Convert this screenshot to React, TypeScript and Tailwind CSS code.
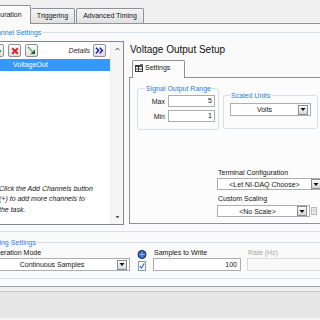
import React from 'react';

const DropArrow = () => (
  <span className="flex h-[10px] w-[10px] shrink-0 items-center justify-center border border-[#8a8d93] bg-gradient-to-b from-[#fafafa] to-[#d6d6d6]">
    <svg width="6" height="5" viewBox="0 0 6 5">
      <path d="M0.5 1h5L3 4z" fill="#111" />
    </svg>
  </span>
);

interface RingProps {
  text: string;
  className: string;
}

const Ring = ({ text, className }: RingProps) => (
  <div className={`flex items-center border border-[#abadb3] bg-white pr-[2px] ${className}`}>
    <span className="flex-1 text-center">{text}</span>
    <DropArrow />
  </div>
);

const ToolButton = ({ children }: { children: React.ReactNode }) => (
  <span className="flex h-[13px] w-[13px] items-center justify-center rounded-[2px] border border-[#8e9196] bg-gradient-to-b from-[#fbfbfb] to-[#dedede]">
    {children}
  </span>
);

export default function App() {
  return (
    <div className="h-[320px] w-[320px] overflow-hidden bg-[#f0f0f0] font-['Liberation_Sans',Arial,sans-serif] text-[7px] leading-[9px] text-[#151515]">
      <div className="-ml-[34px] flex w-[400px] flex-col">
        {/* top tabs */}
        <div className="flex h-[24px] items-end border-b border-[#8e9196] pl-[3px]">
          <div className="relative z-10 -mb-px h-[19px] w-[62px] rounded-t-[2px] border border-b-0 border-[#8e9196] bg-[#fafafa] pl-[10px] pt-[4px]">
            Configuration
          </div>
          <div className="flex h-[15px] w-[44px] items-center justify-center rounded-t-[2px] border border-b-0 border-l-0 border-[#8e9196] bg-gradient-to-b from-[#f5f5f5] to-[#e1e1e1] pb-px">
            Triggering
          </div>
          <div className="ml-px flex h-[15px] w-[68px] items-center justify-center rounded-t-[2px] border border-b-0 border-[#8e9196] bg-gradient-to-b from-[#f5f5f5] to-[#e1e1e1] pb-px">
            Advanced Timing
          </div>
        </div>

        {/* main tab page */}
        <div className="h-[263px] border-b border-[#a3a3a3] bg-[#fafafa] pl-[14px]">
          <fieldset className="mt-[4px] h-[204px] rounded-[3px] border border-[#d5dfe5]">
            <legend className="ml-[6px] px-px text-[#2b80d6]">Channel Settings</legend>
            <div className="flex">
              {/* channel list */}
              <div className="ml-[5px] mt-[4px] flex h-[184px] w-[138px] border border-[#828790] bg-white">
                <div className="flex w-[123px] flex-col">
                  <div className="flex h-[17px] items-center pl-[4px] pr-[4px]">
                    <div className="flex gap-[4px]">
                      <ToolButton>
                        <svg width="8" height="8" viewBox="0 0 8 8">
                          <path d="M4 1v6M1 4h6" stroke="#2f8f2f" strokeWidth="2" />
                        </svg>
                      </ToolButton>
                      <ToolButton>
                        <svg width="8" height="8" viewBox="0 0 8 8">
                          <path d="M1.2 1.2l5.6 5.6M6.8 1.2l-5.6 5.6" stroke="#d7262b" strokeWidth="2" />
                        </svg>
                      </ToolButton>
                      <ToolButton>
                        <svg width="9" height="9" viewBox="0 0 9 9">
                          <path d="M1 1l5 5" stroke="#3c9a3c" strokeWidth="1.6" strokeDasharray="1.5 0.8" />
                          <path d="M8 3.5V8H3.5z" fill="#1d5e22" />
                        </svg>
                      </ToolButton>
                    </div>
                    <span className="ml-auto italic text-[#2a2a2a]">Details</span>
                    <span className="ml-[3px]">
                      <ToolButton>
                        <svg width="9" height="7" viewBox="0 0 9 7">
                          <path d="M1 0.8l2.6 2.7L1 6.2M4.8 0.8l2.6 2.7-2.6 2.7" stroke="#1f1fa6" strokeWidth="1.5" fill="none" />
                        </svg>
                      </ToolButton>
                    </span>
                  </div>
                  <div className="h-[12px] bg-[#3399ff] pl-[26px] leading-[12px] text-white">VoltageOut</div>
                  <div className="mt-auto pb-[9px] pl-[12px] italic leading-[10.5px]">
                    Click the Add Channels button
                    <br />
                    (+) to add more channels to
                    <br />
                    the task.
                  </div>
                </div>
                <div className="flex w-[13px] flex-col items-center justify-between border-l border-[#ececec] bg-[#f5f5f5] pb-[5px] pt-[5px]">
                  <svg width="5" height="4" viewBox="0 0 5 4">
                    <path d="M0.5 3.2L2.5 1l2 2.2" stroke="#555" strokeWidth="1" fill="none" />
                  </svg>
                  <svg width="5" height="4" viewBox="0 0 5 4">
                    <path d="M0.5 1h4L2.5 3.5z" fill="#555" />
                  </svg>
                </div>
              </div>

              {/* voltage output setup */}
              <div className="ml-[5px] flex flex-col">
                <div className="mt-[7px] pl-px text-[10px] leading-[12px] text-[#111]">Voltage Output Setup</div>
                <div className="relative z-10 -mb-px ml-[3px] mt-[4px] flex h-[18px] w-[53px] items-start gap-[2px] rounded-t-[2px] border border-b-0 border-[#8e9196] bg-[#fcfcfc] pl-[2px] pt-[2px]">
                  <svg width="8" height="8" viewBox="0 0 8 8" className="mt-px">
                    <rect x="0" y="1" width="8" height="7" fill="#3b3b3b" />
                    <rect x="1" y="3" width="2" height="1.5" fill="#fff" />
                    <rect x="4" y="3" width="3" height="1.5" fill="#fff" />
                    <rect x="1" y="5.5" width="2" height="1.5" fill="#fff" />
                    <rect x="4" y="5.5" width="3" height="1.5" fill="#fff" />
                    <rect x="5" y="0" width="3" height="2" fill="#6a6a6a" />
                  </svg>
                  <span>Settings</span>
                </div>
                <div className="flex h-[147px] w-[200px] flex-col border border-[#8e9196] bg-[#fcfcfc]">
                  <div className="mt-[6px] flex items-start">
                    <fieldset className="ml-[7px] h-[46px] w-[82px] rounded-[3px] border border-[#d5dfe5]">
                      <legend className="ml-[7px] px-px text-[#2b80d6]">Signal Output Range</legend>
                      <div className="mt-[2px] flex items-center">
                        <span className="w-[27px] text-right">Max</span>
                        <span className="ml-[3px] h-[12px] w-[47px] border border-[#abadb3] bg-white pr-[2px] text-right leading-[10px]">5</span>
                      </div>
                      <div className="mt-[3px] flex items-center">
                        <span className="w-[27px] text-right">Min</span>
                        <span className="ml-[3px] h-[12px] w-[47px] border border-[#abadb3] bg-white pr-[2px] text-right leading-[10px]">1</span>
                      </div>
                    </fieldset>
                    <fieldset className="ml-[4px] mt-[7px] h-[38px] w-[95px] rounded-[3px] border border-[#d5dfe5]">
                      <legend className="ml-[6px] px-px text-[#2b80d6]">Scaled Units</legend>
                      <Ring text="Volts" className="ml-[6px] mt-[3px] h-[13px] w-[81px]" />
                    </fieldset>
                  </div>
                  <div className="ml-[87px] mt-[38px] flex flex-col">
                    <span className="pl-px">Terminal Configuration</span>
                    <Ring text="<Let NI-DAQ Choose>" className="mt-px h-[12px] w-[108px] pr-[3px]" />
                    <span className="mt-[4px] pl-px">Custom Scaling</span>
                    <div className="mt-[2px] flex items-center">
                      <Ring text="<No Scale>" className="h-[12px] w-[93px]" />
                      <svg width="6" height="10" viewBox="0 0 6 10" className="ml-px">
                        <rect x="0.5" y="1.5" width="5" height="7" fill="#ececec" stroke="#b8b8b8" />
                        <path d="M2 4h2M2 6h2" stroke="#c4c4c4" />
                      </svg>
                    </div>
                  </div>
                </div>
              </div>
            </div>
          </fieldset>

          <fieldset className="mt-[6px] h-[41px] rounded-[3px] border border-[#d5dfe5]">
            <legend className="ml-[6px] px-px text-[#2b80d6]">Timing Settings</legend>
            <div className="ml-[5px] flex items-start">
              <div className="flex flex-col">
                <span className="mt-px pl-px">Generation Mode</span>
                <Ring text="Continuous Samples" className="mt-px h-[13px] w-[144px]" />
              </div>
              <svg width="10" height="21" viewBox="0 0 10 21" className="ml-[7px] mt-[3px]">
                <circle cx="5" cy="4.5" r="4" fill="#2f66c8" stroke="#1b2748" />
                <path d="M2 4.5h6M5 1.5v6" stroke="#9cc3f5" strokeWidth="0.8" />
                <rect x="1.5" y="11.5" width="7" height="9" fill="#f4f7fb" stroke="#8a98ad" />
                <path d="M2.8 16l1.6 2 2.8-4.5" stroke="#2a5fc0" strokeWidth="1.1" fill="none" />
              </svg>
              <div className="ml-[6px] flex flex-col">
                <span className="mt-px pl-px">Samples to Write</span>
                <span className="mt-px h-[13px] w-[88px] border border-[#abadb3] bg-white pr-[3px] text-right leading-[11px]">100</span>
              </div>
              <div className="ml-[6px] flex flex-col">
                <span className="mt-px pl-px text-[#a3a3a3]">Rate (Hz)</span>
                <span className="mt-px h-[13px] w-[120px] border border-[#d9dadc] bg-[#f8f8f8]" />
              </div>
            </div>
          </fieldset>
        </div>

        {/* dialog bottom */}
        <div className="flex h-[33px] flex-col">
          <div className="h-[5px] border-b border-[#c9c9c9] bg-[#f0f0f0]" />
          <div className="flex-1 bg-[#e6e6e6]" />
          <div className="h-[2px] bg-[#f3f3f3]" />
        </div>
      </div>
    </div>
  );
}
